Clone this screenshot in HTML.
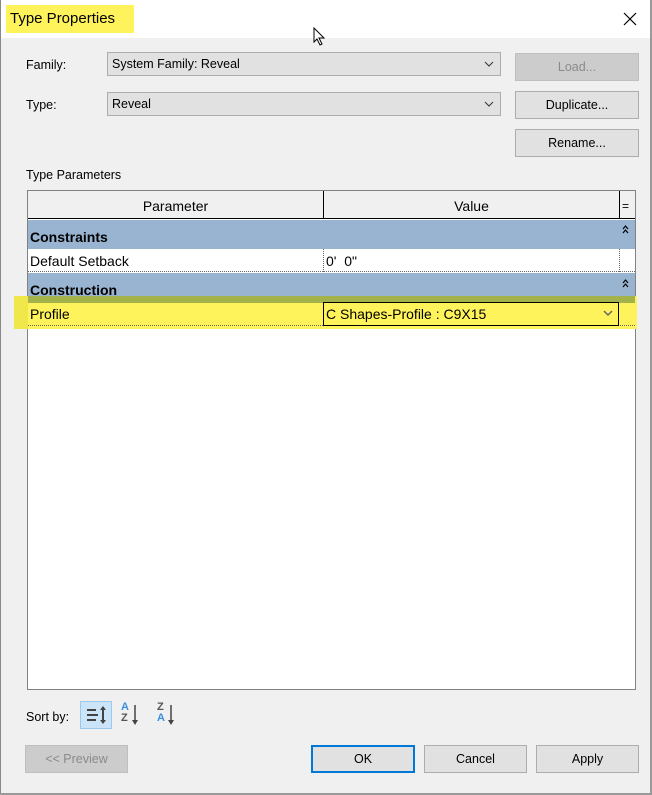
<!DOCTYPE html>
<html><head><style>
*{box-sizing:border-box;margin:0;padding:0}
body{width:652px;height:795px;background:#f0f0f0;font-family:"Liberation Sans",sans-serif;font-size:12.5px;color:#000;position:relative;overflow:hidden}
.a{position:absolute}
.btn{position:absolute;background:#e1e1e1;border:1px solid #adadad;text-align:center;line-height:27px;font-size:12.5px}
.combo{position:absolute;background:#e1e1e1;border:1px solid #adadad;line-height:23px;padding-left:4px}
.chev{position:absolute;right:6px;top:7px}
</style></head><body>
<div class="a" style="left:0;top:0;width:652px;height:38px;background:#fff"></div>
<div class="a" style="left:0;top:0;width:1px;height:795px;background:#888"></div>
<div class="a" style="left:650px;top:0;width:2px;height:795px;background:#999"></div>
<div class="a" style="left:0;top:793px;width:652px;height:2px;background:#999"></div>
<div class="a" style="left:6px;top:5px;width:128px;height:28px;background:#fff35c"></div>
<div class="a" style="left:10px;top:10px;font-size:15px">Type Properties</div>
<svg class="a" style="left:623px;top:12px" width="14" height="14"><path d="M1 1L13 13M13 1L1 13" stroke="#000" stroke-width="1.2"/></svg>
<svg class="a" style="left:313px;top:27px" width="14" height="20"><path d="M1 1L1 15L4 12L7 18L9 17L6 11L11 11Z" fill="#fff" stroke="#000" stroke-width="1"/></svg>

<div class="a" style="left:26px;top:58px">Family:</div>
<div class="combo" style="left:107px;top:52px;width:394px;height:24px">System Family: Reveal<svg class="chev" width="10" height="8"><path d="M1 2L5 6L9 2" stroke="#333" fill="none"/></svg></div>
<div class="btn" style="left:515px;top:53px;width:124px;height:28px;background:#ccc;border-color:#bfbfbf;color:#8a8a8a">Load...</div>
<div class="a" style="left:26px;top:98px">Type:</div>
<div class="combo" style="left:107px;top:92px;width:394px;height:24px">Reveal<svg class="chev" width="10" height="8"><path d="M1 2L5 6L9 2" stroke="#333" fill="none"/></svg></div>
<div class="btn" style="left:515px;top:91px;width:124px;height:28px">Duplicate...</div>
<div class="btn" style="left:515px;top:129px;width:124px;height:28px">Rename...</div>
<div class="a" style="left:26px;top:168px">Type Parameters</div>

<div class="a" style="left:27px;top:190px;width:609px;height:500px;background:#fff;border:1px solid #828282"></div>
<div class="a" style="left:28px;top:191px;width:607px;height:28px;background:#f0f0f0;border-bottom:1px solid #000"></div>
<div class="a" style="left:323px;top:191px;width:1px;height:28px;background:#000"></div>
<div class="a" style="left:619px;top:191px;width:1px;height:28px;background:#000"></div>
<div class="a" style="left:28px;top:198px;width:295px;text-align:center;font-size:14px">Parameter</div>
<div class="a" style="left:324px;top:198px;width:295px;text-align:center;font-size:14px">Value</div>
<div class="a" style="left:622px;top:199px;font-size:12px">=</div>

<div class="a" style="left:28px;top:220px;width:607px;height:29px;background:#99b4d1"></div>
<div class="a" style="left:30px;top:229px;font-weight:bold;font-size:14px">Constraints</div>
<svg class="a" style="left:622px;top:225px" width="7" height="9"><path d="M1 4L3.5 1L6 4M1 8L3.5 5L6 8" stroke="#000" fill="none" stroke-width="1.2"/></svg>
<div class="a" style="left:28px;top:249px;width:607px;height:23px;border-bottom:1px dotted #666"></div>
<div class="a" style="left:323px;top:249px;width:1px;height:23px;border-left:1px dotted #666"></div>
<div class="a" style="left:619px;top:249px;width:1px;height:23px;border-left:1px dotted #666"></div>
<div class="a" style="left:30px;top:253px;font-size:14px">Default Setback</div>
<div class="a" style="left:326px;top:253px;font-size:14px">0'&nbsp; 0"</div>
<div class="a" style="left:28px;top:273px;width:607px;height:23px;background:#99b4d1"></div>
<div class="a" style="left:30px;top:282px;font-weight:bold;font-size:14px">Construction</div>
<svg class="a" style="left:622px;top:279px" width="7" height="9"><path d="M1 4L3.5 1L6 4M1 8L3.5 5L6 8" stroke="#000" fill="none" stroke-width="1.2"/></svg>
<div class="a" style="left:14px;top:296px;width:14px;height:33px;background:#f0e84a"></div>
<div class="a" style="left:28px;top:296px;width:609px;height:33px;background:#fff35c"></div>
<div class="a" style="left:28px;top:296px;width:607px;height:7px;background:#a3b24b"></div>
<div class="a" style="left:28px;top:325px;width:607px;height:1px;border-bottom:1px dotted #666"></div>
<div class="a" style="left:30px;top:306px;font-size:14px">Profile</div>
<div class="a" style="left:323px;top:302px;width:296px;height:24px;border:1px solid #000"></div>
<div class="a" style="left:326px;top:306px;font-size:14px">C Shapes-Profile : C9X15</div>
<svg class="a" style="left:603px;top:310px" width="10" height="7"><path d="M1 1L5 5L9 1" stroke="#666" stroke-width="1.5" fill="none"/></svg>

<div class="a" style="left:26px;top:710px">Sort by:</div>
<div class="a" style="left:80px;top:701px;width:32px;height:28px;background:#cce4f7;border:1px solid #99c9ef"></div>
<svg class="a" style="left:86px;top:705px" width="22" height="20"><path d="M1 5H10M1 10H12M1 15H10" stroke="#444" stroke-width="2"/><path d="M17 2V18" stroke="#444" stroke-width="2"/><path d="M14 5L17 1L20 5ZM14 15L17 19L20 15Z" fill="#444"/></svg>
<div class="a" style="left:121px;top:702px;font-size:11px;font-weight:bold;color:#3b8ee0;line-height:11px">A</div>
<div class="a" style="left:121px;top:713px;font-size:11px;font-weight:bold;color:#555;line-height:11px">Z</div>
<svg class="a" style="left:131px;top:704px" width="8" height="22"><path d="M4 1V19" stroke="#444" stroke-width="1.5"/><path d="M1 16L4 21L7 16Z" fill="#444"/></svg>
<div class="a" style="left:157px;top:702px;font-size:11px;font-weight:bold;color:#555;line-height:11px">Z</div>
<div class="a" style="left:157px;top:713px;font-size:11px;font-weight:bold;color:#3b8ee0;line-height:11px">A</div>
<svg class="a" style="left:167px;top:704px" width="8" height="22"><path d="M4 1V19" stroke="#444" stroke-width="1.5"/><path d="M1 16L4 21L7 16Z" fill="#444"/></svg>

<div class="btn" style="left:25px;top:745px;width:103px;height:28px;background:#ccc;border-color:#bfbfbf;color:#8a8a8a">&lt;&lt; Preview</div>
<div class="btn" style="left:311px;top:745px;width:104px;height:28px;border:2px solid #0078d7;line-height:25px">OK</div>
<div class="btn" style="left:424px;top:745px;width:103px;height:28px">Cancel</div>
<div class="btn" style="left:536px;top:745px;width:103px;height:28px">Apply</div>
</body></html>
